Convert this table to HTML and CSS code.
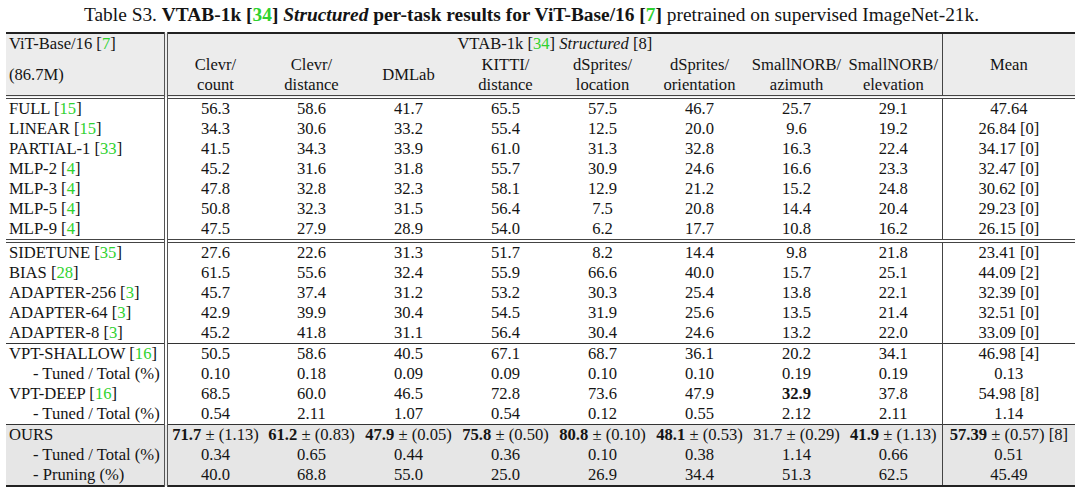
FILE: index.html
```html
<!DOCTYPE html>
<html>
<head>
<meta charset="utf-8">
<link rel="stylesheet" href="styles.css">
</head>
<body>
<table class="res">
<caption>Table S3. <b>VTAB-1k [<span class="ref">34</span>]</b> <b><i>Structured</i></b> <b>per-task results for ViT-Base/16 [<span class="ref">7</span>]</b> pretrained on supervised ImageNet-21k.</caption>
<colgroup>
<col class="c-name"><col class="c-d"><col class="c-d"><col class="c-d"><col class="c-d"><col class="c-d"><col class="c-d"><col class="c-d"><col class="c-d"><col class="c-mean">
</colgroup>
<thead>
<tr class="h1">
<th class="name">ViT-Base/16 [<span class="ref">7</span>]</th>
<th colspan="8">VTAB-1k [<span class="ref">34</span>] <i>Structured</i> [8]</th>
<th class="mean" rowspan="2">Mean</th>
</tr>
<tr class="h2">
<th class="name">(86.7M)</th>
<th>Clevr/<br>count</th>
<th>Clevr/<br>distance</th>
<th>DMLab</th>
<th>KITTI/<br>distance</th>
<th>dSprites/<br>location</th>
<th>dSprites/<br>orientation</th>
<th>SmallNORB/<br>azimuth</th>
<th>SmallNORB/<br>elevation</th>
</tr>
</thead>
<tbody>
<tr><td class="name">FULL [<span class="ref">15</span>]</td><td>56.3</td><td>58.6</td><td>41.7</td><td>65.5</td><td>57.5</td><td>46.7</td><td>25.7</td><td>29.1</td><td class="mean">47.64</td></tr>
<tr><td class="name">LINEAR [<span class="ref">15</span>]</td><td>34.3</td><td>30.6</td><td>33.2</td><td>55.4</td><td>12.5</td><td>20.0</td><td>9.6</td><td>19.2</td><td class="mean">26.84 [0]</td></tr>
<tr><td class="name">PARTIAL-1 [<span class="ref">33</span>]</td><td>41.5</td><td>34.3</td><td>33.9</td><td>61.0</td><td>31.3</td><td>32.8</td><td>16.3</td><td>22.4</td><td class="mean">34.17 [0]</td></tr>
<tr><td class="name">MLP-2 [<span class="ref">4</span>]</td><td>45.2</td><td>31.6</td><td>31.8</td><td>55.7</td><td>30.9</td><td>24.6</td><td>16.6</td><td>23.3</td><td class="mean">32.47 [0]</td></tr>
<tr><td class="name">MLP-3 [<span class="ref">4</span>]</td><td>47.8</td><td>32.8</td><td>32.3</td><td>58.1</td><td>12.9</td><td>21.2</td><td>15.2</td><td>24.8</td><td class="mean">30.62 [0]</td></tr>
<tr><td class="name">MLP-5 [<span class="ref">4</span>]</td><td>50.8</td><td>32.3</td><td>31.5</td><td>56.4</td><td>7.5</td><td>20.8</td><td>14.4</td><td>20.4</td><td class="mean">29.23 [0]</td></tr>
<tr><td class="name">MLP-9 [<span class="ref">4</span>]</td><td>47.5</td><td>27.9</td><td>28.9</td><td>54.0</td><td>6.2</td><td>17.7</td><td>10.8</td><td>16.2</td><td class="mean">26.15 [0]</td></tr>
</tbody>
<tbody class="g2">
<tr><td class="name">SIDETUNE [<span class="ref">35</span>]</td><td>27.6</td><td>22.6</td><td>31.3</td><td>51.7</td><td>8.2</td><td>14.4</td><td>9.8</td><td>21.8</td><td class="mean">23.41 [0]</td></tr>
<tr><td class="name">BIAS [<span class="ref">28</span>]</td><td>61.5</td><td>55.6</td><td>32.4</td><td>55.9</td><td>66.6</td><td>40.0</td><td>15.7</td><td>25.1</td><td class="mean">44.09 [2]</td></tr>
<tr><td class="name">ADAPTER-256 [<span class="ref">3</span>]</td><td>45.7</td><td>37.4</td><td>31.2</td><td>53.2</td><td>30.3</td><td>25.4</td><td>13.8</td><td>22.1</td><td class="mean">32.39 [0]</td></tr>
<tr><td class="name">ADAPTER-64 [<span class="ref">3</span>]</td><td>42.9</td><td>39.9</td><td>30.4</td><td>54.5</td><td>31.9</td><td>25.6</td><td>13.5</td><td>21.4</td><td class="mean">32.51 [0]</td></tr>
<tr><td class="name">ADAPTER-8 [<span class="ref">3</span>]</td><td>45.2</td><td>41.8</td><td>31.1</td><td>56.4</td><td>30.4</td><td>24.6</td><td>13.2</td><td>22.0</td><td class="mean">33.09 [0]</td></tr>
</tbody>
<tbody class="g3">
<tr><td class="name">VPT-SHALLOW [<span class="ref">16</span>]</td><td>50.5</td><td>58.6</td><td>40.5</td><td>67.1</td><td>68.7</td><td>36.1</td><td>20.2</td><td>34.1</td><td class="mean">46.98 [4]</td></tr>
<tr><td class="name sub">- Tuned / Total (%)</td><td>0.10</td><td>0.18</td><td>0.09</td><td>0.09</td><td>0.10</td><td>0.10</td><td>0.19</td><td>0.19</td><td class="mean">0.13</td></tr>
<tr><td class="name">VPT-DEEP [<span class="ref">16</span>]</td><td>68.5</td><td>60.0</td><td>46.5</td><td>72.8</td><td>73.6</td><td>47.9</td><td><b>32.9</b></td><td>37.8</td><td class="mean">54.98 [8]</td></tr>
<tr><td class="name sub">- Tuned / Total (%)</td><td>0.54</td><td>2.11</td><td>1.07</td><td>0.54</td><td>0.12</td><td>0.55</td><td>2.12</td><td>2.11</td><td class="mean">1.14</td></tr>
</tbody>
<tbody class="ours">
<tr><td class="name">OURS</td><td><b>71.7</b> ± (1.13)</td><td><b>61.2</b> ± (0.83)</td><td><b>47.9</b> ± (0.05)</td><td><b>75.8</b> ± (0.50)</td><td><b>80.8</b> ± (0.10)</td><td><b>48.1</b> ± (0.53)</td><td>31.7 ± (0.29)</td><td><b>41.9</b> ± (1.13)</td><td class="mean"><b>57.39</b> ± (0.57) [8]</td></tr>
<tr><td class="name sub">- Tuned / Total (%)</td><td>0.34</td><td>0.65</td><td>0.44</td><td>0.36</td><td>0.10</td><td>0.38</td><td>1.14</td><td>0.66</td><td class="mean">0.51</td></tr>
<tr><td class="name sub">- Pruning (%)</td><td>40.0</td><td>68.8</td><td>55.0</td><td>25.0</td><td>26.9</td><td>34.4</td><td>51.3</td><td>62.5</td><td class="mean">45.49</td></tr>
</tbody>
</table>
</body>
</html>
```
FILE: styles.css
```css
html, body {
  margin: 0;
  padding: 0;
  background: #ffffff;
}

.res {
  margin: 0 0 0 6px;
  width: 1069px;
  table-layout: fixed;
  border-collapse: collapse;
  font-family: "Liberation Serif", "Times New Roman", serif;
  font-size: 16.6px;
  line-height: 20px;
  color: #141414;
}

.res caption {
  font-size: 19.4px;
  line-height: 22px;
  padding: 4px 18px 6px 0;
  text-align: center;
  white-space: nowrap;
}

.c-name { width: 160px; }
.c-d { width: 97px; }
.c-mean { width: 133px; }

.ref { color: #2fd22f; }

.res th,
.res td {
  padding: 0;
  text-align: center;
  white-space: nowrap;
  font-weight: normal;
}

.res thead {
  border-top: 2px solid #222;
  border-bottom: 4px double #444;
}

.res thead th {
  background: #ececec;
  vertical-align: middle;
}

.res .h1 th { height: 20px; }
.res .h2 th { height: 41px; }

.res .name {
  text-align: left;
  padding-left: 3px;
  border-right: 4px double #555;
}

.res .h1 .name { vertical-align: top; }

.res .sub { padding-left: 27px; }

.res .mean { border-left: 1px solid #444; }

.res tbody td { height: 20px; }

.res .g2 {
  border-top: 4px double #444;
}

.res .g3 {
  border-top: 1px solid #333;
}

.res .ours {
  border-top: 1px solid #333;
  border-bottom: 2px solid #222;
}

.res .ours td {
  background: #e6e6e6;
}

.res b { font-weight: bold; }
```
